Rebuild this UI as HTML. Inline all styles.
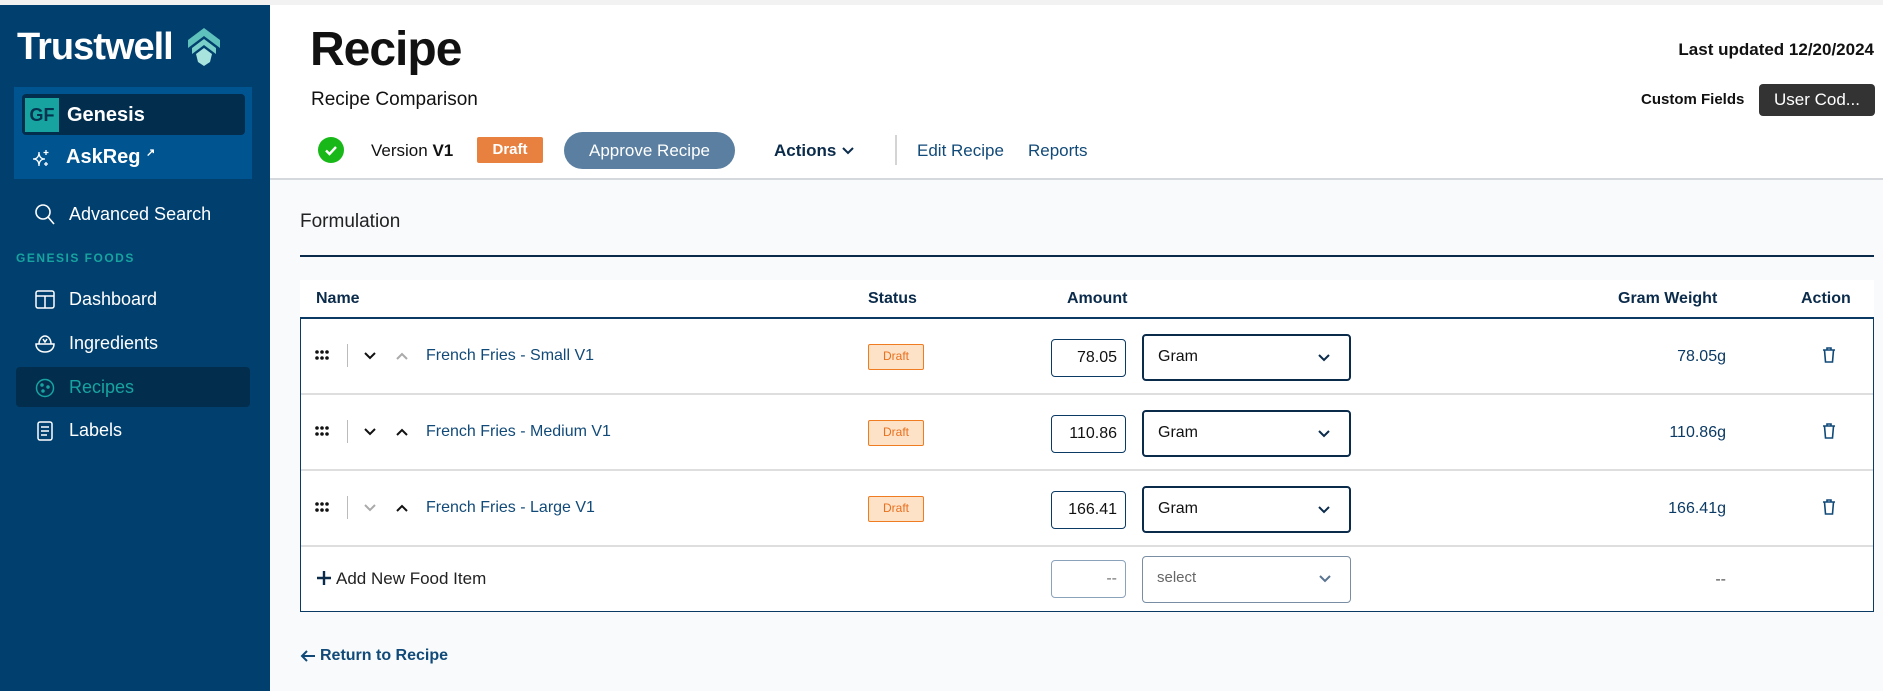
<!DOCTYPE html>
<html><head><meta charset="utf-8"><style>
*{box-sizing:border-box;margin:0;padding:0}
body{width:1883px;height:691px;background:#f8fafc;font-family:"Liberation Sans",sans-serif;position:relative;overflow:hidden;color:#111}
.a{position:absolute;white-space:nowrap}
#sb{left:0;top:5px;width:270px;height:686px;background:#003f6e}
.nav{color:#fff;font-size:18px}
.hdr{left:270px;top:5px;width:1613px;height:175px;background:#fff;border-bottom:2px solid #d5d9de}
.th{font-weight:bold;font-size:16px;color:#0b2b4b}
.row{left:301px;width:1572px;height:76px;border-bottom:2px solid #dedede}
.link{color:#114a78;font-size:16px}
.badge{width:56px;height:26px;background:#fde2c8;border:1.5px solid #f07c22;color:#e8701e;font-size:12px;border-radius:2px;text-align:center;line-height:23px}
.inp{width:75px;height:38px;border:1.5px solid #0b3a64;border-radius:4px;background:#fff;font-size:16px;text-align:right;padding-right:8px;line-height:35px}
.sel{width:209px;height:47px;border:2.5px solid #0b2b4b;border-radius:4px;background:#fff;font-size:16px;padding-left:14px;padding-top:12px;line-height:18px}
.sel svg{position:absolute;right:18px;top:17px}
.gw{font-size:16px;color:#0b3a64;text-align:right;width:120px}
</style></head><body>
<div class="a" style="left:0;top:0;width:1883px;height:5px;background:#f2f2f2"></div>
<div class="a" id="sb"></div>
<div class="a" style="left:17px;top:26px;color:#fff;font-weight:bold;font-size:38px;letter-spacing:-1px">Trustwell</div>
<svg class="a" style="left:186px;top:26px" width="36" height="40" viewBox="0 0 36 40"><path d="M18 2 L34 14 L34 22 L18 10 L2 22 L2 14Z" fill="#5fc1bb"/><path d="M18 13 L30 22 L30 28 L18 19 L6 28 L6 22Z" fill="#7ad0c9"/><path d="M18 22 L26 28 L24 36 L18 40 L12 36 L10 28Z" fill="#a8e3de"/></svg>
<div class="a" style="left:14px;top:87px;width:238px;height:92px;background:#005591"></div>
<div class="a" style="left:22px;top:94px;width:223px;height:41px;background:#022d4d;border-radius:4px"></div>
<div class="a" style="left:25px;top:98px;width:34px;height:34px;background:#17a4a0;color:#04324f;font-weight:bold;font-size:18px;text-align:center;line-height:34px">GF</div>
<div class="a nav" style="left:67px;top:104px;font-weight:bold;font-size:20px">Genesis</div>
<svg class="a" style="left:31px;top:148px" width="20" height="20" viewBox="0 0 20 20" fill="none" stroke="#fff" stroke-width="1.3"><path d="M8 4C8 9 6 11 2 11C6 11 8 13 8 18C8 13 10 11 14 11C10 11 8 9 8 4Z"/><path d="M15 2V7M12.5 4.5H17.5M15 14V18M13 16H17"/></svg>
<div class="a nav" style="left:66px;top:146px;font-weight:bold;font-size:20px">AskReg <span style="font-size:11px;vertical-align:top">↗</span></div>
<svg class="a" style="left:34px;top:203px" width="22" height="24" viewBox="0 0 22 24" fill="none" stroke="#fff" stroke-width="1.6"><circle cx="9" cy="9" r="7"/><path d="M14 14 L20 21"/></svg>
<div class="a nav" style="left:69px;top:204px">Advanced Search</div>
<div class="a" style="left:16px;top:251px;color:#17a4a0;font-weight:bold;font-size:12px;letter-spacing:1.5px">GENESIS FOODS</div>
<svg class="a" style="left:35px;top:290px" width="20" height="20" viewBox="0 0 20 20" fill="none" stroke="#fff" stroke-width="1.5"><rect x="1" y="1" width="18" height="17" rx="2"/><path d="M1 6H19M10 6V18"/></svg>
<div class="a nav" style="left:69px;top:289px">Dashboard</div>
<svg class="a" style="left:34px;top:333px" width="22" height="22" viewBox="0 0 22 22" fill="none" stroke="#fff" stroke-width="1.5"><path d="M2 11H20C20 16 16 19 11 19C6 19 2 16 2 11Z"/><path d="M5 11C5 6 8 3 11 3C14 3 17 6 17 11M9 6L11 9L13 6"/></svg>
<div class="a nav" style="left:69px;top:333px">Ingredients</div>
<div class="a" style="left:16px;top:367px;width:234px;height:40px;background:#022d4d;border-radius:4px"></div>
<svg class="a" style="left:35px;top:378px" width="20" height="20" viewBox="0 0 20 20" fill="none" stroke="#17a4a0" stroke-width="1.5"><circle cx="10" cy="10" r="8.5"/><circle cx="7" cy="7" r="1" fill="#17a4a0"/><circle cx="13" cy="9" r="1" fill="#17a4a0"/><circle cx="8" cy="13" r="1" fill="#17a4a0"/></svg>
<div class="a nav" style="left:69px;top:377px;color:#17a4a0">Recipes</div>
<svg class="a" style="left:37px;top:421px" width="16" height="20" viewBox="0 0 16 20" fill="none" stroke="#fff" stroke-width="1.5"><rect x="1" y="1" width="14" height="18" rx="2"/><path d="M4 6H12M4 10H12M4 14H10"/></svg>
<div class="a nav" style="left:69px;top:420px">Labels</div>

<div class="a hdr"></div>
<div class="a" style="left:310px;top:22px;font-weight:bold;font-size:48px;letter-spacing:-1px">Recipe</div>
<div class="a" style="left:311px;top:89px;font-size:19px">Recipe Comparison</div>
<svg class="a" style="left:318px;top:137px" width="26" height="26" viewBox="0 0 26 26"><circle cx="13" cy="13" r="13" fill="#18b818"/><path d="M8 13.5L11.5 17L18 10" stroke="#fff" stroke-width="2.4" fill="none"/></svg>
<div class="a" style="left:371px;top:141px;font-size:17px">Version <b>V1</b></div>
<div class="a" style="left:477px;top:137px;width:66px;height:26px;background:#e8813f;color:#fff;font-weight:bold;font-size:15px;text-align:center;line-height:26px;border-radius:2px">Draft</div>
<div class="a" style="left:564px;top:132px;width:171px;height:37px;background:#5a7fa0;color:#fff;font-size:17px;text-align:center;line-height:37px;border-radius:19px">Approve Recipe</div>
<div class="a" style="left:774px;top:141px;font-size:17px;font-weight:bold;color:#0b2b4b">Actions <svg width="14" height="10" viewBox="0 0 14 10"><path d="M2 2L7 7L12 2" stroke="#0b2b4b" stroke-width="2" fill="none"/></svg></div>
<div class="a" style="left:895px;top:135px;width:2px;height:30px;background:#d4d4d4"></div>
<div class="a link" style="left:917px;top:141px;font-size:17px">Edit Recipe</div>
<div class="a link" style="left:1028px;top:141px;font-size:17px">Reports</div>
<div class="a" style="right:9px;top:40px;font-weight:bold;font-size:17px">Last updated 12/20/2024</div>
<div class="a" style="left:1641px;top:91px;font-weight:bold;font-size:15px">Custom Fields</div>
<div class="a" style="left:1759px;top:84px;width:116px;height:32px;background:#333;color:#fff;font-size:17px;border-radius:4px;text-align:center;line-height:32px;overflow:hidden">User Cod...</div>

<div class="a" style="left:300px;top:211px;font-size:19px;color:#222">Formulation</div>
<div class="a" style="left:300px;top:255px;width:1574px;height:2px;background:#0b2b4b"></div>
<div class="a" style="left:300px;top:280px;width:1574px;height:38px;background:#fff"></div>
<div class="a th" style="left:316px;top:290px">Name</div>
<div class="a th" style="left:868px;top:290px">Status</div>
<div class="a th" style="left:1067px;top:290px">Amount</div>
<div class="a th" style="left:1618px;top:290px">Gram Weight</div>
<div class="a th" style="left:1801px;top:290px">Action</div>
<div class="a" style="left:300px;top:317px;width:1574px;height:295px;background:#fff;border:1.5px solid #0b3a64;border-top:2.5px solid #0b3a64"></div>

<div class="a row" style="top:319px"></div>
<div class="a row" style="top:395px"></div>
<div class="a row" style="top:471px"></div>

<svg class="a" style="left:315px;top:350px" width="14" height="10" viewBox="0 0 14 10" fill="#111"><circle cx="2" cy="2" r="1.8"/><circle cx="7" cy="2" r="1.8"/><circle cx="12" cy="2" r="1.8"/><circle cx="2" cy="8" r="1.8"/><circle cx="7" cy="8" r="1.8"/><circle cx="12" cy="8" r="1.8"/></svg>
<div class="a" style="left:347px;top:344px;width:1px;height:23px;background:#bbb"></div>
<svg class="a" style="left:363px;top:351px" width="14" height="10"><path d="M2 2L7 7L12 2" stroke="#111" stroke-width="2" fill="none"/></svg>
<svg class="a" style="left:395px;top:351px" width="14" height="10"><path d="M2 8L7 3L12 8" stroke="#aaa" stroke-width="2" fill="none"/></svg>
<div class="a link" style="left:426px;top:347px">French Fries - Small V1</div>
<div class="a badge" style="left:868px;top:344px">Draft</div>
<div class="a inp" style="left:1051px;top:339px">78.05</div>
<div class="a sel" style="left:1142px;top:334px">Gram<svg width="14" height="10"><path d="M2 2L7 7L12 2" stroke="#0b2b4b" stroke-width="2" fill="none"/></svg></div>
<div class="a gw" style="left:1606px;top:348px">78.05g</div>
<svg class="a" style="left:1822px;top:346px" width="14" height="18" viewBox="0 0 14 18" fill="none" stroke="#114a78" stroke-width="1.6"><path d="M1 4H13M5 4V2H9V4M2.5 4L3.5 16H10.5L11.5 4"/></svg>

<svg class="a" style="left:315px;top:426px" width="14" height="10" viewBox="0 0 14 10" fill="#111"><circle cx="2" cy="2" r="1.8"/><circle cx="7" cy="2" r="1.8"/><circle cx="12" cy="2" r="1.8"/><circle cx="2" cy="8" r="1.8"/><circle cx="7" cy="8" r="1.8"/><circle cx="12" cy="8" r="1.8"/></svg>
<div class="a" style="left:347px;top:420px;width:1px;height:23px;background:#bbb"></div>
<svg class="a" style="left:363px;top:427px" width="14" height="10"><path d="M2 2L7 7L12 2" stroke="#111" stroke-width="2" fill="none"/></svg>
<svg class="a" style="left:395px;top:427px" width="14" height="10"><path d="M2 8L7 3L12 8" stroke="#111" stroke-width="2" fill="none"/></svg>
<div class="a link" style="left:426px;top:423px">French Fries - Medium V1</div>
<div class="a badge" style="left:868px;top:420px">Draft</div>
<div class="a inp" style="left:1051px;top:415px">110.86</div>
<div class="a sel" style="left:1142px;top:410px">Gram<svg width="14" height="10"><path d="M2 2L7 7L12 2" stroke="#0b2b4b" stroke-width="2" fill="none"/></svg></div>
<div class="a gw" style="left:1606px;top:424px">110.86g</div>
<svg class="a" style="left:1822px;top:422px" width="14" height="18" viewBox="0 0 14 18" fill="none" stroke="#114a78" stroke-width="1.6"><path d="M1 4H13M5 4V2H9V4M2.5 4L3.5 16H10.5L11.5 4"/></svg>

<svg class="a" style="left:315px;top:502px" width="14" height="10" viewBox="0 0 14 10" fill="#111"><circle cx="2" cy="2" r="1.8"/><circle cx="7" cy="2" r="1.8"/><circle cx="12" cy="2" r="1.8"/><circle cx="2" cy="8" r="1.8"/><circle cx="7" cy="8" r="1.8"/><circle cx="12" cy="8" r="1.8"/></svg>
<div class="a" style="left:347px;top:496px;width:1px;height:23px;background:#bbb"></div>
<svg class="a" style="left:363px;top:503px" width="14" height="10"><path d="M2 2L7 7L12 2" stroke="#aaa" stroke-width="2" fill="none"/></svg>
<svg class="a" style="left:395px;top:503px" width="14" height="10"><path d="M2 8L7 3L12 8" stroke="#111" stroke-width="2" fill="none"/></svg>
<div class="a link" style="left:426px;top:499px">French Fries - Large V1</div>
<div class="a badge" style="left:868px;top:496px">Draft</div>
<div class="a inp" style="left:1051px;top:491px">166.41</div>
<div class="a sel" style="left:1142px;top:486px">Gram<svg width="14" height="10"><path d="M2 2L7 7L12 2" stroke="#0b2b4b" stroke-width="2" fill="none"/></svg></div>
<div class="a gw" style="left:1606px;top:500px">166.41g</div>
<svg class="a" style="left:1822px;top:498px" width="14" height="18" viewBox="0 0 14 18" fill="none" stroke="#114a78" stroke-width="1.6"><path d="M1 4H13M5 4V2H9V4M2.5 4L3.5 16H10.5L11.5 4"/></svg>

<svg class="a" style="left:316px;top:570px" width="16" height="16"><path d="M8 1V15M1 8H15" stroke="#0b2b4b" stroke-width="2.4"/></svg>
<div class="a" style="left:336px;top:569px;font-size:17px;color:#222">Add New Food Item</div>
<div class="a inp" style="left:1051px;top:560px;border-color:#8aa3bb;color:#777">--</div>
<div class="a sel" style="left:1142px;top:556px;border:1.5px solid #7a8ea3;color:#666;font-size:15px">select<svg width="14" height="10"><path d="M2 2L7 7L12 2" stroke="#5a7490" stroke-width="2" fill="none"/></svg></div>
<div class="a gw" style="left:1606px;top:571px;color:#555">--</div>

<svg class="a" style="left:300px;top:649px" width="16" height="14"><path d="M15 7H2M7 2L2 7L7 12" stroke="#114a78" stroke-width="2" fill="none"/></svg>
<div class="a" style="left:320px;top:647px;font-weight:bold;font-size:16px;color:#114a78">Return to Recipe</div>
</body></html>
